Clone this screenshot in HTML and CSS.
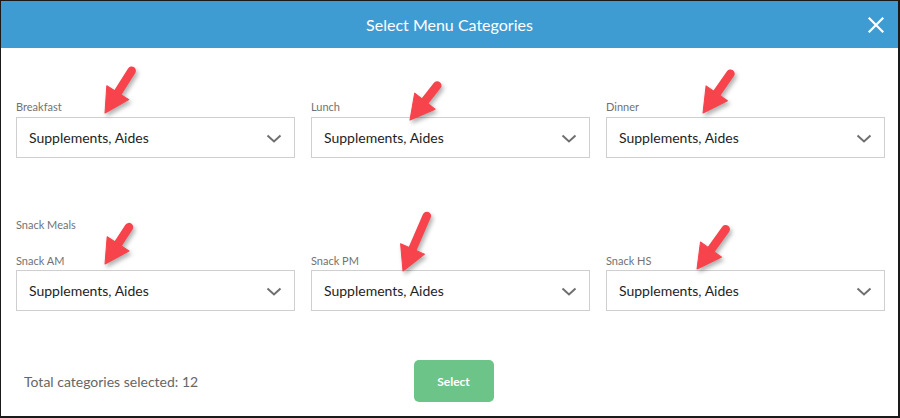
FILE: index.html
```html
<!DOCTYPE html>
<html lang="en">
<head>
<meta charset="utf-8">
<title>Select Menu Categories</title>
<link rel="stylesheet" href="styles.css">
</head>
<body>
<div class="modal">
  <header class="modal-header">
    <span></span>
    <h1 class="modal-title">Select Menu Categories</h1>
    <button class="close" aria-label="Close">
      <svg width="16" height="16" viewBox="0 0 16 16"><path d="M1.5 1.5 L14.5 14.5 M14.5 1.5 L1.5 14.5" stroke="#fff" stroke-width="2.2" stroke-linecap="square" fill="none"/></svg>
    </button>
  </header>

  <main class="modal-body">
    <section class="grid row-main">
      <div class="field">
        <label class="field-label">Breakfast</label>
        <div class="select"><span>Supplements, Aides</span><svg class="chev" width="16" height="9" viewBox="0 0 16 9"><polyline points="1.5,1.5 8,7.5 14.5,1.5" fill="none" stroke="#6f6f6f" stroke-width="2"/></svg></div>
      </div>
      <div class="field">
        <label class="field-label">Lunch</label>
        <div class="select"><span>Supplements, Aides</span><svg class="chev" width="16" height="9" viewBox="0 0 16 9"><polyline points="1.5,1.5 8,7.5 14.5,1.5" fill="none" stroke="#6f6f6f" stroke-width="2"/></svg></div>
      </div>
      <div class="field">
        <label class="field-label">Dinner</label>
        <div class="select"><span>Supplements, Aides</span><svg class="chev" width="16" height="9" viewBox="0 0 16 9"><polyline points="1.5,1.5 8,7.5 14.5,1.5" fill="none" stroke="#6f6f6f" stroke-width="2"/></svg></div>
      </div>
    </section>

    <div class="group-label">Snack Meals</div>

    <section class="grid row-snack">
      <div class="field">
        <label class="field-label">Snack AM</label>
        <div class="select"><span>Supplements, Aides</span><svg class="chev" width="16" height="9" viewBox="0 0 16 9"><polyline points="1.5,1.5 8,7.5 14.5,1.5" fill="none" stroke="#6f6f6f" stroke-width="2"/></svg></div>
      </div>
      <div class="field">
        <label class="field-label">Snack PM</label>
        <div class="select"><span>Supplements, Aides</span><svg class="chev" width="16" height="9" viewBox="0 0 16 9"><polyline points="1.5,1.5 8,7.5 14.5,1.5" fill="none" stroke="#6f6f6f" stroke-width="2"/></svg></div>
      </div>
      <div class="field">
        <label class="field-label">Snack HS</label>
        <div class="select"><span>Supplements, Aides</span><svg class="chev" width="16" height="9" viewBox="0 0 16 9"><polyline points="1.5,1.5 8,7.5 14.5,1.5" fill="none" stroke="#6f6f6f" stroke-width="2"/></svg></div>
      </div>
    </section>
  </main>

  <footer class="modal-footer">
    <span class="total">Total categories selected: 12</span>
    <button class="btn-select">Select</button>
    <span></span>
  </footer>

  <svg class="arrows" width="900" height="418" viewBox="0 0 900 418">
    <g class="arrow" transform="translate(105 113) rotate(122.2)">
      <line x1="-50" y1="0" x2="-18" y2="0"/>
      <polygon points="0,0 -24,-13 -24,13"/>
    </g>
    <g class="arrow" transform="translate(410 120) rotate(128.3)">
      <line x1="-44" y1="0" x2="-18" y2="0"/>
      <polygon points="0,0 -24,-13 -24,13"/>
    </g>
    <g class="arrow" transform="translate(703 113) rotate(124.9)">
      <line x1="-48" y1="0" x2="-18" y2="0"/>
      <polygon points="0,0 -24,-13 -24,13"/>
    </g>
    <g class="arrow" transform="translate(105 264) rotate(123)">
      <line x1="-44" y1="0" x2="-18" y2="0"/>
      <polygon points="0,0 -24,-13 -24,13"/>
    </g>
    <g class="arrow" transform="translate(403 271) rotate(113.4)">
      <line x1="-60" y1="0" x2="-18" y2="0"/>
      <polygon points="0,0 -24,-13 -24,13"/>
    </g>
    <g class="arrow" transform="translate(697 269) rotate(125.8)">
      <line x1="-49" y1="0" x2="-18" y2="0"/>
      <polygon points="0,0 -24,-13 -24,13"/>
    </g>
  </svg>
</div>
</body>
</html>
```

FILE: styles.css
```css
* { box-sizing: border-box; }

html, body {
  margin: 0;
  padding: 0;
  background: #fff;
}

body {
  font-family: Lato, "Open Sans", "Liberation Sans", sans-serif;
  color: #222;
}

.modal {
  position: relative;
  width: 900px;
  height: 418px;
  border-style: solid;
  border-color: #1a1a1a;
  border-width: 1px 2px 2px 1px;
  background: #fff;
  display: flex;
  flex-direction: column;
  overflow: hidden;
}

.modal-header {
  height: 47px;
  background: #3f9cd3;
  display: grid;
  grid-template-columns: 1fr auto 1fr;
  align-items: center;
}

.modal-title {
  margin: 0;
  font-size: 16px;
  font-weight: 400;
  color: #fff;
}

.close {
  justify-self: end;
  margin-right: 14px;
  padding: 0;
  border: 0;
  background: transparent;
  width: 16px;
  height: 16px;
  display: flex;
  margin-top: 1px;
}

.modal-body {
  padding: 52px 15px 0 15px;
}

.grid {
  display: grid;
  grid-template-columns: repeat(3, 279px);
  column-gap: 16px;
}

.field-label {
  display: block;
  font-size: 11px;
  line-height: 14px;
  color: #727272;
  margin-bottom: 3px;
}

.select {
  height: 41px;
  border: 1px solid #cfcfcf;
  display: flex;
  align-items: center;
  justify-content: space-between;
  padding: 0 12px 0 12px;
  font-size: 14px;
  color: #1e1e1e;
}

.chev { display: block; margin-top: 1px; }

.group-label {
  margin-top: 60px;
  font-size: 11px;
  line-height: 14px;
  color: #727272;
}

.row-snack {
  margin-top: 22px;
}

.row-snack .field-label { margin-bottom: 2px; }

.modal-footer {
  margin-top: 49px;
  padding: 0 15px 0 23px;
  display: grid;
  grid-template-columns: 1fr auto 1fr;
  align-items: center;
}

.total {
  font-size: 14px;
  color: #666;
}

.btn-select {
  width: 80px;
  height: 42px;
  border: 0;
  border-radius: 5px;
  background: #6dc488;
  color: #fff;
  font-family: Lato, "Open Sans", sans-serif;
  font-weight: 700;
  font-size: 12px;
  padding: 0;
}

.arrows {
  position: absolute;
  top: -1px;
  left: -1px;
  pointer-events: none;
  filter: drop-shadow(2px 3px 2px rgba(0, 0, 0, 0.3));
}

.arrow line {
  stroke: #f7434b;
  stroke-width: 8.5;
  stroke-linecap: round;
}

.arrow polygon {
  fill: #f7434b;
  stroke: #f7434b;
  stroke-width: 1;
  stroke-linejoin: round;
}
```
